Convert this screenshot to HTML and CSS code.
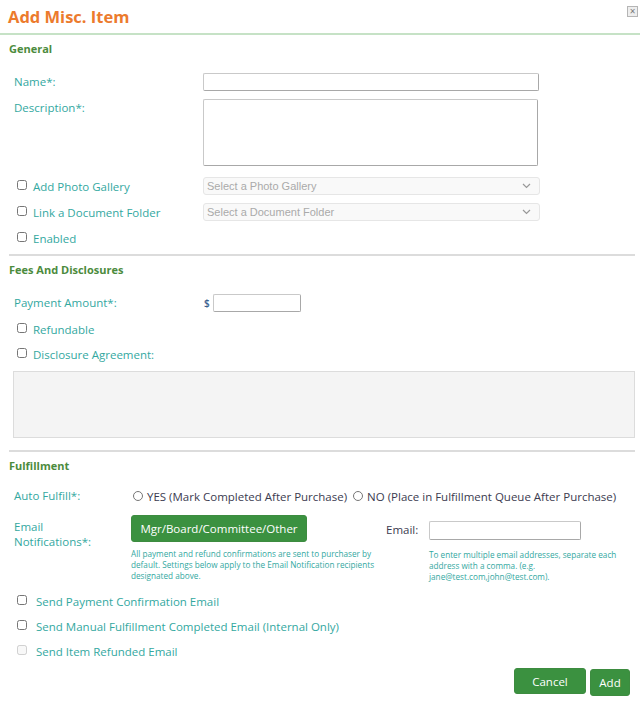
FILE: index.html
```html
<!DOCTYPE html>
<html lang="en">
<head>
    <meta charset="UTF-8">
    <title>Add Misc. Item</title>
    <link rel="stylesheet" href="styles.css">
</head>
<body>
    <div class="titlebar">
        <h1>Add Misc. Item</h1>
        <span class="close">&times;</span>
    </div>

    <!-- General -->
    <div class="section">
        <h2>General</h2>
        <div class="grid">
            <label class="lbl">Name*:</label>
            <input type="text" class="txt wide">

            <label class="lbl top">Description*:</label>
            <textarea class="txt area"></textarea>

            <label class="check gap3"><input type="checkbox"> Add Photo Gallery</label>
            <div class="sel gap3"><span>Select a Photo Gallery</span><svg width="9" height="6" viewBox="0 0 9 6"><path d="M1 1l3.5 3.5L8 1" fill="none" stroke="#999" stroke-width="1.2"/></svg></div>

            <label class="check"><input type="checkbox"> Link a Document Folder</label>
            <div class="sel"><span>Select a Document Folder</span><svg width="9" height="6" viewBox="0 0 9 6"><path d="M1 1l3.5 3.5L8 1" fill="none" stroke="#999" stroke-width="1.2"/></svg></div>

            <label class="check"><input type="checkbox"> Enabled</label>
            <div></div>
        </div>
    </div>

    <!-- Fees -->
    <div class="section">
        <h2>Fees And Disclosures</h2>
        <div class="grid fees">
            <label class="lbl">Payment Amount*:</label>
            <div class="money"><span class="dollar">$</span><input type="text" class="txt amount"></div>

            <label class="check span gap1"><input type="checkbox"> Refundable</label>
            <label class="check span"><input type="checkbox"> Disclosure Agreement:</label>
        </div>
        <div class="disclosure"></div>
    </div>

    <!-- Fulfillment -->
    <div class="section last">
        <h2>Fulfillment</h2>
        <div class="auto">
            <span class="lbl flabel">Auto Fulfill*:</span>
            <label class="radio"><input type="radio" name="af"> YES (Mark Completed After Purchase)</label>
            <label class="radio"><input type="radio" name="af"> NO (Place in Fulfillment Queue After Purchase)</label>
        </div>
        <div class="notify">
            <span class="lbl flabel">Email Notifications*:</span>
            <div class="col left">
                <button class="btn mgr">Mgr/Board/Committee/Other</button>
                <p class="help">All payment and refund confirmations are sent to purchaser by default. Settings below apply to the Email Notification recipients designated above.</p>
            </div>
            <span class="elabel">Email:</span>
            <div class="col right">
                <input type="text" class="txt email">
                <p class="help">To enter multiple email addresses, separate each address with a comma. (e.g. jane@test.com,john@test.com).</p>
            </div>
        </div>
        <div class="sends">
            <label class="check"><input type="checkbox"> Send Payment Confirmation Email</label>
            <label class="check"><input type="checkbox"> Send Manual Fulfillment Completed Email (Internal Only)</label>
            <label class="check"><input type="checkbox" disabled> Send Item Refunded Email</label>
        </div>
    </div>

    <div class="actions">
        <button class="btn cancel">Cancel</button>
        <button class="btn add">Add</button>
    </div>
</body>
</html>
```

FILE: styles.css
```css
body{
    margin: 0;
    font-family: "Open Sans", "Noto Sans", sans-serif;
    font-size: 11.5px;
    color: #33a89f;
    background: #fff;
}
.titlebar{
    display: flex;
    justify-content: space-between;
    align-items: flex-start;
    height: 33px;
    border-bottom: 2px solid #c6e2c6;
    padding: 0 2px 0 8px;
}
h1{
    margin: 0;
    font-size: 16.5px;
    line-height: 33px;
    color: #ec7b2d;
    font-weight: 700;
}
.close{
    margin-top: 6px;
    width: 9px;
    height: 9px;
    border: 1px solid #b5b5b5;
    background: #eee;
    color: #777;
    font-size: 10px;
    line-height: 8px;
    text-align: center;
}
.section{
    margin: 0 5px 0 9px;
    border-bottom: 2px solid #dcdcdc;
    padding-bottom: 7px;
}
.section.last{
    border-bottom: none;
}
h2{
    margin: 0;
    padding-top: 6px;
    font-size: 11px;
    line-height: 15px;
    font-weight: 700;
    color: #4c8b3d;
}
.grid{
    display: grid;
    grid-template-columns: 189px 337px;
    row-gap: 8px;
    align-items: center;
    padding-left: 5px;
    margin-top: 17px;
}
.lbl{
    line-height: 18px;
}
.lbl.top{
    align-self: start;
}
.gap3{
    margin-top: 3px;
}
.gap1{
    margin-top: 1px;
}
.txt{
    box-sizing: border-box;
    border: 1px solid #a8a8a8;
    border-top-color: #c9c9c9;
    border-left-color: #c9c9c9;
    border-radius: 2px;
    background: #fff;
    margin: 0;
    font: inherit;
}
.wide{
    width: 336px;
    height: 18px;
    display: block;
}
.area{
    width: 335px;
    height: 67px;
    resize: none;
    display: block;
}
.sel{
    box-sizing: border-box;
    width: 337px;
    height: 18px;
    border: 1px solid #e6e6e6;
    border-radius: 3px;
    background: #f9f9f9;
    display: flex;
    align-items: center;
    justify-content: space-between;
    padding: 0 8px 0 3px;
    font-family: "Liberation Sans", Arial, sans-serif;
    font-size: 11px;
    color: #aaa;
}
.check{
    display: flex;
    align-items: center;
    gap: 6px;
    height: 18px;
}
.check input{
    width: 10px;
    height: 10px;
    margin: 0 0 3px 3px;
}
.span{
    grid-column: 1 / 3;
}
.fees{
    margin-top: 17px;
    row-gap: 7px;
}
.money{
    display: flex;
    align-items: center;
    gap: 3px;
    margin-left: 1px;
}
.dollar{
    color: #3a5f8f;
    font-weight: 600;
    font-size: 10px;
}
.amount{
    width: 88px;
    height: 18px;
}
.disclosure{
    margin: 8px 0 5px 4px;
    height: 65px;
    background: #f4f4f4;
    border: 1px solid #dcdcdc;
}
.auto{
    display: flex;
    align-items: center;
    padding-left: 5px;
    margin-top: 14px;
    height: 18px;
}
.flabel{
    width: 117px;
    flex: none;
}
.radio{
    display: flex;
    align-items: center;
    gap: 4px;
    color: #3b3b4f;
    margin-right: 4px;
    white-space: nowrap;
}
.radio input{
    width: 10px;
    height: 10px;
    margin: 0 0 1px 2px;
}
.notify{
    display: flex;
    align-items: flex-start;
    padding-left: 5px;
    margin-top: 10px;
}
.notify .flabel{
    box-sizing: border-box;
    padding-right: 30px;
    line-height: 15px;
    margin-top: 4px;
}
.col{
    display: flex;
    flex-direction: column;
    flex: none;
}
.left{
    width: 255px;
}
.right{
    width: 200px;
}
.elabel{
    width: 43px;
    flex: none;
    color: #3b3b4f;
    margin-top: 7px;
}
.help{
    margin: 6px 0 0;
    font-size: 8.2px;
    line-height: 11px;
    color: #33a89f;
}
.left .help{
    width: 250px;
}
.right .help{
    width: 197px;
    margin-top: 9px;
}
.btn{
    border: 1px solid #3d8c40;
    background: #3b9140;
    color: #fff;
    border-radius: 3px;
    font-family: "Open Sans", sans-serif;
    font-size: 11.5px;
    cursor: pointer;
}
.mgr{
    width: 176px;
    height: 27px;
    padding: 0;
}
.email{
    width: 152px;
    height: 19px;
    margin-top: 6px;
}
.sends{
    display: flex;
    flex-direction: column;
    gap: 7px;
    margin-top: 10px;
}
.sends .check{
    gap: 9px;
    padding-left: 5px;
}
.actions{
    display: flex;
    justify-content: flex-end;
    align-items: flex-start;
    gap: 4px;
    padding-right: 10px;
    margin-top: 1px;
}
.cancel{
    width: 72px;
    height: 26px;
}
.add{
    width: 40px;
    height: 27px;
    margin-top: 1px;
    padding: 0;
}
```
